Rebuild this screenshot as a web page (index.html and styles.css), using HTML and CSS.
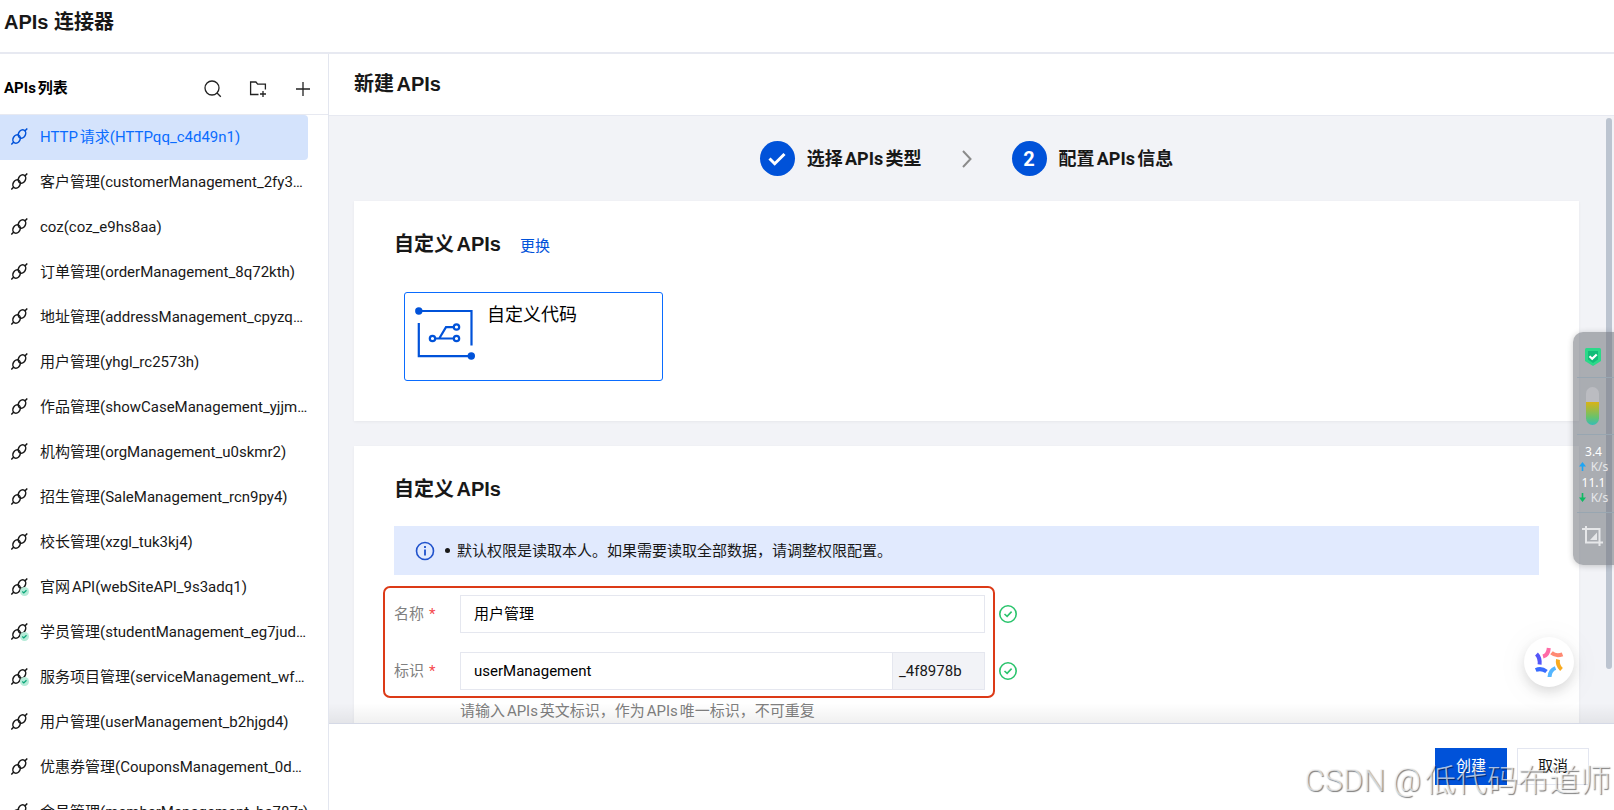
FILE: index.html
```html
<!DOCTYPE html>
<html lang="zh-CN">
<head>
<meta charset="utf-8">
<title>APIs 连接器</title>
<link rel="stylesheet" href="styles.css">
</head>
<body>
<svg class="sprite" aria-hidden="true">
  <symbol id="plug" viewBox="0 0 17 17">
    <g fill="none" stroke="currentColor" stroke-width="1.5">
      <path d="M.3 16.500 3 13.800M13.600 3.200 16.300.5"/>
      <ellipse cx="5.600" cy="11" rx="3.500" ry="4.400" transform="rotate(28 5.600 11)"/>
      <ellipse cx="11" cy="6" rx="3.500" ry="4.400" transform="rotate(28 11 6)"/>
    </g>
  </symbol>
  <symbol id="ok" viewBox="0 0 18 18">
    <circle cx="9" cy="9" r="8.200" fill="none" stroke="#2bc46d" stroke-width="1.600"/>
    <path d="m5.500 9 2.600 2.400L12.600 6.600" fill="none" stroke="#2bc46d" stroke-width="1.600"/>
  </symbol>
  <symbol id="badge" viewBox="0 0 9 9">
    <circle cx="4.500" cy="4.500" r="4.500" fill="#b5ebd8"/>
    <path d="m2.300 4.600 1.500 1.300 2.700-2.600" fill="none" stroke="#0aa678" stroke-width="1.300"/>
  </symbol>
</svg>

<header class="topbar"><h1>APIs 连接器</h1></header>

<div class="layout">
  <aside class="sidebar">
    <div class="sidebar-head">
      <h2>APIs列表</h2>
      <button class="icon-btn" type="button" aria-label="搜索">
        <svg width="18" height="18" viewBox="0 0 18 18" fill="none" stroke="#222" stroke-width="1.300"><circle cx="8" cy="8" r="7"/><path d="m13 13 3.800 3.800"/></svg>
      </button>
      <button class="icon-btn" type="button" aria-label="新建文件夹">
        <svg width="18" height="18" viewBox="0 0 18 18" fill="none" stroke="#222" stroke-width="1.300"><path d="M9.500 14.500H1.600V2h5.300l1.800 2.200h7.700v5.300M14 11v6M11 14h6"/></svg>
      </button>
      <button class="icon-btn" type="button" aria-label="新增">
        <svg width="18" height="18" viewBox="0 0 18 18" fill="none" stroke="#222" stroke-width="1.300"><path d="M9 2v14M2 9h14"/></svg>
      </button>
    </div>
    <nav class="api-list" aria-label="APIs列表">
      <a class="api active" href="#"><span class="api-icon"><svg><use href="#plug"/></svg></span><span class="api-name">HTTP请求(HTTPqq_c4d49n1)</span></a>
      <a class="api" href="#"><span class="api-icon"><svg><use href="#plug"/></svg></span><span class="api-name">客户管理(customerManagement_2fy3…</span></a>
      <a class="api" href="#"><span class="api-icon"><svg><use href="#plug"/></svg></span><span class="api-name">coz(coz_e9hs8aa)</span></a>
      <a class="api" href="#"><span class="api-icon"><svg><use href="#plug"/></svg></span><span class="api-name">订单管理(orderManagement_8q72kth)</span></a>
      <a class="api" href="#"><span class="api-icon"><svg><use href="#plug"/></svg></span><span class="api-name">地址管理(addressManagement_cpyzq…</span></a>
      <a class="api" href="#"><span class="api-icon"><svg><use href="#plug"/></svg></span><span class="api-name">用户管理(yhgl_rc2573h)</span></a>
      <a class="api" href="#"><span class="api-icon"><svg><use href="#plug"/></svg></span><span class="api-name">作品管理(showCaseManagement_yjjm…</span></a>
      <a class="api" href="#"><span class="api-icon"><svg><use href="#plug"/></svg></span><span class="api-name">机构管理(orgManagement_u0skmr2)</span></a>
      <a class="api" href="#"><span class="api-icon"><svg><use href="#plug"/></svg></span><span class="api-name">招生管理(SaleManagement_rcn9py4)</span></a>
      <a class="api" href="#"><span class="api-icon"><svg><use href="#plug"/></svg></span><span class="api-name">校长管理(xzgl_tuk3kj4)</span></a>
      <a class="api" href="#"><span class="api-icon"><svg><use href="#plug"/></svg><svg class="badge"><use href="#badge"/></svg></span><span class="api-name">官网API(webSiteAPI_9s3adq1)</span></a>
      <a class="api" href="#"><span class="api-icon"><svg><use href="#plug"/></svg><svg class="badge"><use href="#badge"/></svg></span><span class="api-name">学员管理(studentManagement_eg7jud…</span></a>
      <a class="api" href="#"><span class="api-icon"><svg><use href="#plug"/></svg><svg class="badge"><use href="#badge"/></svg></span><span class="api-name">服务项目管理(serviceManagement_wf…</span></a>
      <a class="api" href="#"><span class="api-icon"><svg><use href="#plug"/></svg></span><span class="api-name">用户管理(userManagement_b2hjgd4)</span></a>
      <a class="api" href="#"><span class="api-icon"><svg><use href="#plug"/></svg></span><span class="api-name">优惠券管理(CouponsManagement_0d…</span></a>
      <a class="api" href="#"><span class="api-icon"><svg><use href="#plug"/></svg></span><span class="api-name">会员管理(memberManagement_ba787r)</span></a>
    </nav>
  </aside>

  <main class="main">
    <div class="main-head"><h2>新建APIs</h2></div>
    <div class="content">
      <ol class="steps">
        <li class="step"><span class="dot"><svg width="18" height="14" viewBox="0 0 18 14"><path d="m1.500 6.500 5.200 5.200L16.500 2" fill="none" stroke="#fff" stroke-width="3"/></svg></span>选择APIs类型</li>
        <li class="step-sep" aria-hidden="true"><svg width="10" height="18" viewBox="0 0 10 18"><path d="m1 1 7.500 8L1 17" fill="none" stroke="#8b8b8b" stroke-width="2"/></svg></li>
        <li class="step"><span class="dot">2</span>配置APIs信息</li>
      </ol>

      <section class="card">
        <div class="card-title"><h3>自定义APIs</h3><a href="#">更换</a></div>
        <button class="type-tile" type="button">
          <svg width="60" height="54" viewBox="0 0 60 54" fill="none" stroke="#0052d9" stroke-width="2.200">
            <path d="M4 4h52.500v34.500M3.800 16v33.200H56"/>
            <circle cx="3.800" cy="4" r="3.700" fill="#0052d9" stroke="none"/><circle cx="56.300" cy="49" r="3.700" fill="#0052d9" stroke="none"/>
            <path d="M21 31.500h17M24.500 31l6.500-10.800h7"/>
            <circle cx="17.500" cy="31.500" r="2.700"/><circle cx="41.500" cy="31.500" r="2.700"/><circle cx="41.500" cy="20" r="2.700"/>
          </svg>
          <span>自定义代码</span>
        </button>
      </section>

      <section class="card">
        <div class="card-title"><h3>自定义APIs</h3></div>
        <div class="notice">
          <svg width="20" height="20" viewBox="0 0 20 20" fill="none" stroke="#1f52cc"><circle cx="10" cy="10" r="8.500" stroke-width="1.600"/><path d="M10 8.500v6M10 5v2" stroke-width="1.800"/></svg>
          <span class="bullet"></span>
          <span>默认权限是读取本人。如果需要读取全部数据，请调整权限配置。</span>
        </div>
        <form class="form">
          <div class="field">
            <label for="name">名称<span class="req">*</span></label>
            <div class="control"><input id="name" type="text" value="用户管理"></div>
            <svg class="ok"><use href="#ok"/></svg>
          </div>
          <div class="field">
            <label for="ident">标识<span class="req">*</span></label>
            <div class="control"><input id="ident" type="text" value="userManagement"><span class="suffix">_4f8978b</span></div>
            <svg class="ok"><use href="#ok"/></svg>
          </div>
          <p class="hint">请输入APIs英文标识，作为APIs唯一标识，不可重复</p>
          <div class="highlight"></div>
        </form>
      </section>
      <div class="scroll-thumb"></div>
      <div class="fade"></div>
    </div>
    <footer class="actions">
      <button class="btn primary" type="button">创建</button>
      <button class="btn" type="button">取消</button>
    </footer>
  </main>
</div>

<button class="assistant" type="button" aria-label="助手">
  <svg width="30" height="32" viewBox="0 0 30 32" fill="none" stroke-width="4">
    <path d="M9 10.500c4-1 5.500-4 5.800-8.500" stroke="#ff6ba6"/>
    <path d="M17.500 6.800c3.500 3 7 3 11 1.500" stroke="#ff8a73"/>
    <path d="M24 13.500c-.8 4 .3 7 3.500 10" stroke="#f9ab20"/>
    <path d="M21.500 22c-4 1.500-5.800 4.500-6 9" stroke="#54b6ff"/>
    <path d="M12.500 25.500c-3.500-2.700-7-3-10.800-1.500" stroke="#386cff"/>
    <path d="M5.600 18.500C6 14.500 5.500 11 2.500 8" stroke="#5556f8"/>
  </svg>
</button>

<aside class="monitor" aria-label="系统监控">
  <div class="cell shield"><svg width="16" height="18" viewBox="0 0 16 18"><path d="M0 1.500Q0 0 1.500 0h13Q16 0 16 1.500V13l-8 5-8-5Z" fill="#2bd989"/><path d="M3 3h10v8.500L8 15l-5-3.500Z" fill="#12bc78"/><path d="m4.500 8.300 2.700 2.500 4.500-4.300" fill="none" stroke="#fff" stroke-width="2.200"/></svg></div>
  <div class="cell level"><span class="tube"></span></div>
  <div class="cell speed">
    <span>3.4</span>
    <span class="unit"><svg width="7" height="9" viewBox="0 0 7 9"><path d="M3.500 0 7 4.500H4.300V9H2.700V4.500H0Z" fill="#1da5f5"/></svg>K/s</span>
    <span>11.1</span>
    <span class="unit"><svg width="7" height="9" viewBox="0 0 7 9"><path d="M3.500 9 7 4.500H4.300V0H2.700v4.500H0Z" fill="#0dbb62"/></svg>K/s</span>
  </div>
  <div class="cell crop"><svg width="21" height="20" viewBox="0 0 21 20" fill="none" stroke="#e6e7e9" stroke-width="2"><path d="M4 0v16.500h17M0 3h17.500v17"/><path d="M8 14h7V6.500Z" fill="#e6e7e9" stroke="none"/></svg></div>
</aside>

<div class="watermark">CSDN @低代码布道师</div>
</body>
</html>
```
FILE: styles.css
```css
* { box-sizing: border-box; }

body {
  margin: 0;
  height: 100vh;
  display: flex;
  flex-direction: column;
  overflow: hidden;
  position: relative;
  background: #fff;
  color: #181818;
  font: 15px/22px Roboto, "Noto Sans CJK SC", sans-serif;
  text-autospace: normal;
}

h1, h2, h3, p, ol { margin: 0; padding: 0; }
h1, h2, h3 { font: 700 20px/28px "Liberation Sans", "Noto Sans CJK SC", sans-serif; }
a { text-decoration: none; }
button, input { font: inherit; color: inherit; }
button { cursor: pointer; }
.sprite { position: absolute; width: 0; height: 0; }

.topbar {
  flex: none;
  height: 54px;
  padding: 8px 4px;
  border-bottom: 2px solid #e7e9f1;
}

.layout { flex: 1; min-height: 0; display: flex; }

.sidebar {
  flex: none;
  width: 329px;
  border-right: 1px solid #e3e6ef;
  overflow: hidden;
}
.sidebar-head {
  display: flex;
  align-items: center;
  gap: 27px;
  height: 61px;
  padding: 9px 16px 0 4px;
  border-bottom: 1px solid #e7e9f1;
}
.sidebar-head h2 {
  flex: 1;
  padding-bottom: 2px;
  color: #000;
  font: 700 15px/22px Roboto, "Noto Sans CJK SC", sans-serif;
}
.icon-btn { display: flex; padding: 0; border: 0; background: none; }

.api {
  display: flex;
  align-items: center;
  gap: 12px;
  width: 308px;
  height: 45px;
  padding: 0 0 2px 11px;
  color: #181818;
  white-space: nowrap;
}
.api.active { color: #0a6cff; background: #d4e3fc; border-radius: 0 4px 4px 0; }
.api.active .api-icon { color: #0052d9; }
.api-icon { position: relative; flex: none; display: flex; width: 17px; height: 17px; }
.api-icon svg { width: 17px; height: 17px; }
.api-icon .badge { position: absolute; right: -1px; bottom: -1px; width: 9px; height: 9px; }

.main { flex: 1; min-width: 0; display: flex; flex-direction: column; }
.main-head { flex: none; height: 62px; padding: 16px 25px; border-bottom: 1px solid #e7e9f1; }

.content {
  flex: 1;
  min-height: 0;
  position: relative;
  overflow: hidden;
  padding: 25px 35px 0 25px;
  background: #f2f3f7;
}

.steps {
  display: flex;
  justify-content: center;
  align-items: center;
  gap: 40px;
  margin-bottom: 25px;
  list-style: none;
  font-size: 18px;
  font-weight: 700;
}
.step { display: flex; align-items: center; gap: 12px; }
.step-sep { display: flex; }
.dot {
  display: flex;
  align-items: center;
  justify-content: center;
  width: 35px;
  height: 35px;
  border-radius: 50%;
  background: #0052d9;
  color: #fff;
  font-size: 20px;
}

.card { margin-bottom: 25px; padding: 29px 40px 40px; background: #fff; box-shadow: 0 1px 3px #0000000d; }
.card-title { display: flex; align-items: center; gap: 19px; }
.card-title a { color: #0052d9; padding-top: 3px; }

.type-tile {
  display: flex;
  align-items: flex-start;
  gap: 12px;
  width: 259px;
  height: 89px;
  margin: 34px 0 0 10px;
  padding: 14px 10px;
  border: 1px solid #0a6cff;
  border-radius: 3px;
  background: #fff;
  color: #000;
  font-size: 18px;
  line-height: 26px;
}
.type-tile span { margin-top: -5px; }

.notice {
  display: flex;
  align-items: center;
  height: 49px;
  margin-top: 23px;
  padding-left: 21px;
  background: #e1eafe;
}
.bullet { width: 5px; height: 5px; margin: 0 7px 0 10px; border-radius: 50%; background: #181818; }

.form { position: relative; display: grid; gap: 19px; margin-top: 20px; }
.field { display: flex; align-items: center; }
.field label { width: 66px; color: #808080; }
.req { margin-left: 5px; color: #f5484e; }
.control { display: flex; width: 525px; height: 38px; border: 1px solid #e5e7ef; }
.control input { flex: 1; min-width: 0; padding: 0 13px; border: 0; outline: 0; background: none; color: #000; }
.suffix {
  width: 92px;
  padding: 0 6px;
  line-height: 36px;
  border-left: 1px solid #e5e7ef;
  background: #f2f3f7;
}
.ok { width: 18px; height: 18px; margin-left: 14px; }
.hint { margin: -9px 0 0 66px; color: #808080; }
.highlight {
  position: absolute;
  left: -11px;
  top: -9px;
  width: 612px;
  height: 112px;
  border: 2px solid #dc3a17;
  border-radius: 7px;
  pointer-events: none;
}

.scroll-thumb { position: absolute; top: 2px; right: 2px; width: 6px; height: 551px; border-radius: 3px; background: #bcc4d0; }
.fade { position: absolute; left: 0; right: 0; bottom: 0; height: 20px; background: linear-gradient(#0000, #0000000f); pointer-events: none; }

.actions {
  flex: none;
  display: flex;
  justify-content: flex-end;
  gap: 10px;
  height: 87px;
  padding: 24px 25px;
  border-top: 1px solid #d5d9e6;
}
.btn { width: 72px; height: 37px; padding: 0 0 2px; border: 1px solid #e3e6f0; background: #fff; }
.btn.primary { border-color: #0052d9; background: #0052d9; color: #fff; }

.assistant {
  position: absolute;
  right: 40px;
  bottom: 123px;
  display: flex;
  align-items: center;
  justify-content: center;
  width: 50px;
  height: 50px;
  padding: 0;
  border: 0;
  border-radius: 50%;
  background: #fff;
  box-shadow: 0 5px 12px #0000001f, 0 4px 36px #0000000d;
}

.monitor {
  position: absolute;
  top: 332px;
  right: 0;
  width: 41px;
  padding: 0 0 0 4px;
  border-radius: 10px 0 0 10px;
  background: #6f727a8c;
  box-shadow: 0 1px 6px #0003;
  color: #fff;
  font: 12px/14px "Noto Sans", sans-serif;
}
.cell { display: flex; align-items: center; justify-content: center; padding-right: 6px; }
.cell + .cell { border-top: 1px solid #98a6b1; }
.shield { height: 45px; padding-top: 5px; }
.level { height: 57px; }
.tube { width: 13px; height: 38px; border-radius: 7px; background: linear-gradient(#bbbcc1 40%, #d8b317 40%, #66c36e 80%, #35bdb5); }
.speed { flex-direction: column; height: 78px; padding-right: 4px; }
.speed > span { line-height: 17px; }
.speed .unit { display: flex; align-items: center; gap: 5px; line-height: 14px; color: #e6e7e9; }
.crop { height: 53px; padding-bottom: 6px; }

.watermark {
  position: absolute;
  right: 3px;
  bottom: 6px;
  color: #f4f4f4b3;
  font-size: 31px;
  line-height: 46px;
  font-weight: 300;
  white-space: nowrap;
  text-shadow: 1px 1px 1px #00000085;
  pointer-events: none;
}
```
